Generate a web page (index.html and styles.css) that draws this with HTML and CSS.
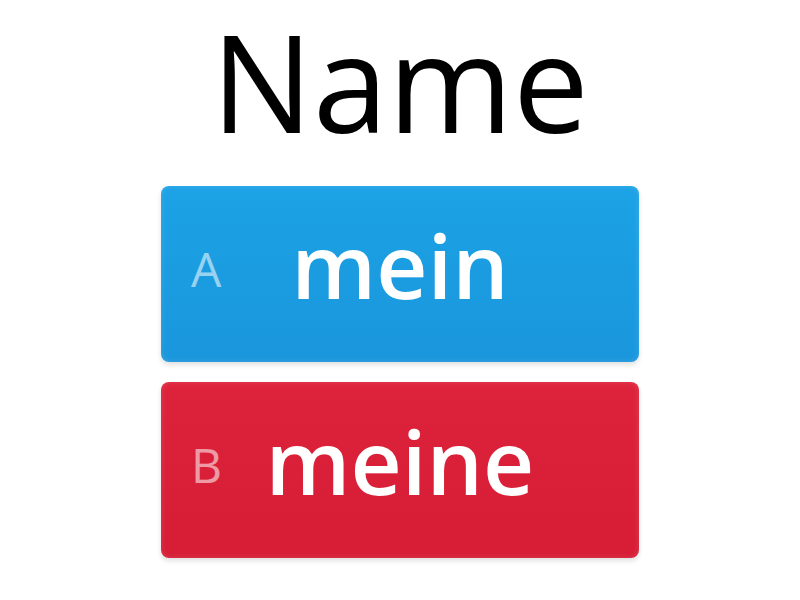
FILE: index.html
```html
<!DOCTYPE html>
<html lang="de">
<head>
    <meta charset="UTF-8">
    <meta name="viewport" content="width=device-width, initial-scale=1.0">
    <title>Name</title>
    <link rel="stylesheet" href="styles.css">
</head>
<body>
    <div class="quiz">
        <h1 class="question">Name</h1>
        <div class="answers">
            <div class="answer answer-blue">
                <span class="answer-key">A</span>
                <span class="answer-text">mein</span>
            </div>
            <div class="answer answer-red">
                <span class="answer-key">B</span>
                <span class="answer-text">meine</span>
            </div>
        </div>
    </div>
</body>
</html>
```

FILE: styles.css
```css
body {
    margin: 0;
    padding: 0;
    background: #fff;
    font-family: "Open Sans", "Noto Sans", sans-serif;
    color: #000;
}

.quiz {
    width: 800px;
    height: 600px;
    display: flex;
    flex-direction: column;
    align-items: center;
    box-sizing: border-box;
}

.question {
    margin: 0;
    font-size: 135px;
    font-weight: 400;
    line-height: 1.2;
}

.answers {
    display: flex;
    flex-direction: column;
    gap: 20px;
    margin-top: 24px;
}

.answer {
    width: 478px;
    height: 176px;
    border-radius: 8px;
    display: grid;
    grid-template-columns: 89px 1fr 89px;
    align-items: center;
    color: #fff;
    box-shadow: inset 0 0 6px rgba(255, 255, 255, 0.15), 0 3px 5px rgba(0, 0, 0, 0.12);
}

.answer-blue {
    background: linear-gradient(180deg, #1ca2e6, #1a96dc);
}

.answer-red {
    background: linear-gradient(180deg, #dd233b, #d61d35);
}

.answer-key {
    padding-left: 30px;
    padding-bottom: 11px;
    font-size: 48px;
    font-weight: 400;
    opacity: 0.55;
}

.answer-text {
    text-align: center;
    font-size: 89px;
    font-weight: 600;
    line-height: 1;
    padding-bottom: 20px;
}
```
